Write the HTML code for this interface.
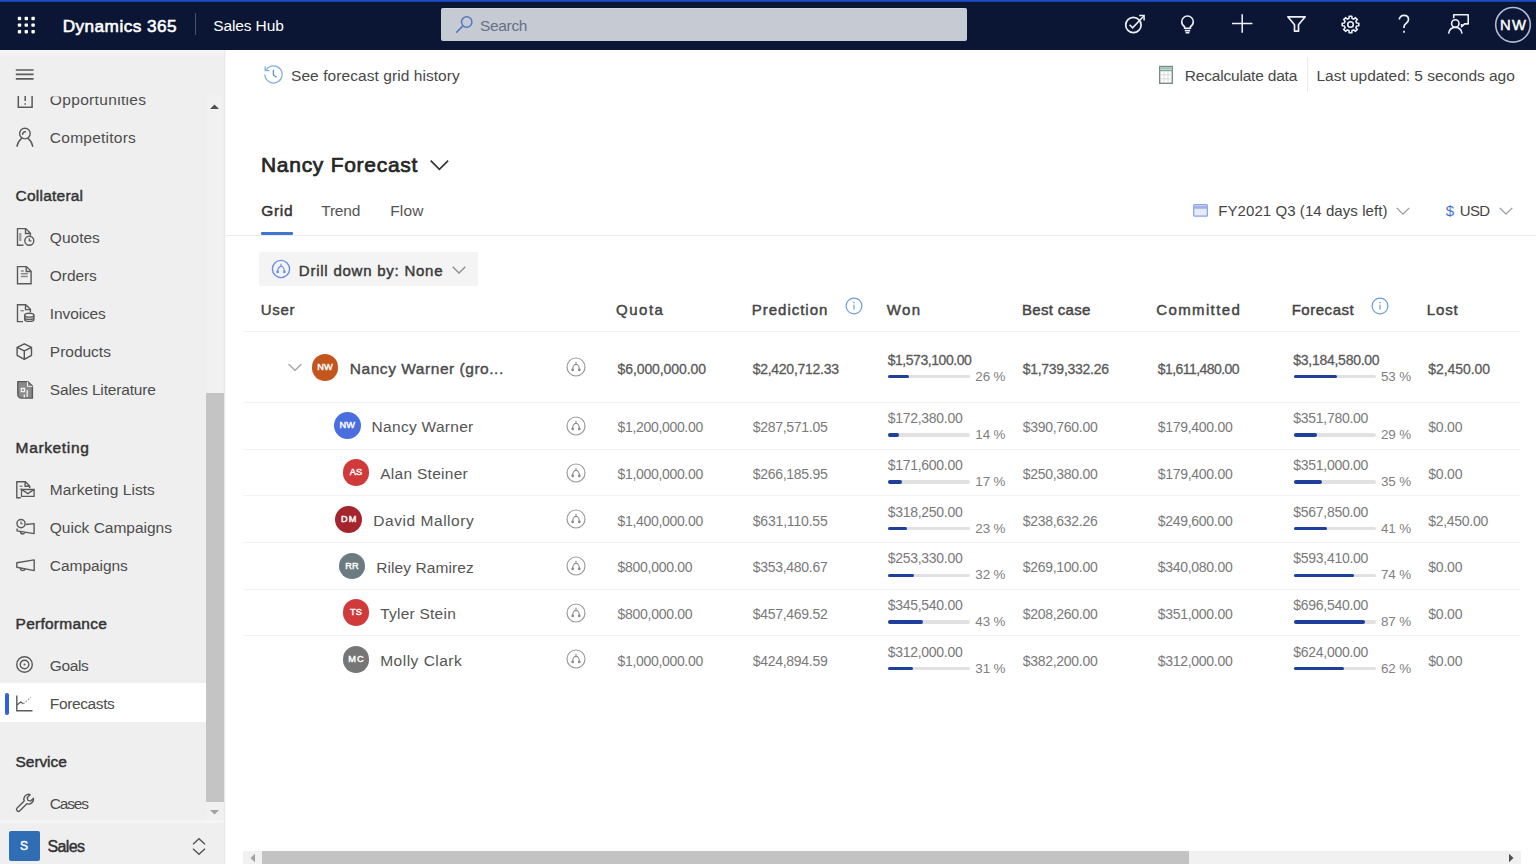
<!DOCTYPE html>
<html lang="en">
<head>
<meta charset="utf-8">
<title>Forecasts - Dynamics 365 Sales Hub</title>
<style>
html,body{margin:0;padding:0;}
body{width:1536px;height:864px;overflow:hidden;background:#fff;position:relative;font-family:"Liberation Sans",Arial,sans-serif;}
.abs{position:absolute;}
.t{position:absolute;white-space:pre;font-family:"Liberation Sans",Arial,sans-serif;}
#topline{left:0;top:0;width:1536px;height:2px;background:linear-gradient(180deg,#1d4cc8 0,#1d4cc8 55%,#15358f 100%);}
#header{left:0;top:2px;width:1536px;height:48px;background:#0a1634;}
#search{left:441.300px;top:8.200px;width:526px;height:33.300px;background:#c6cad3;border-radius:2px;border-top:1px solid #d2d5dc;box-sizing:border-box;}
#sidebar{left:0;top:50px;width:224px;height:814px;background:linear-gradient(180deg,#f6f6f6 0,#efefef 7px,#efefef 100%);border-right:1px solid #e9e9e9;box-sizing:content-box;}
#sbtrack{left:206px;top:95px;width:17px;height:728px;background:#f1f1f1;}
#sbthumb{left:206px;top:393.300px;width:17.600px;height:409px;background:#c4c4c4;}
#sbedge{left:225px;top:50px;width:2px;height:814px;background:linear-gradient(90deg,#f7f7f7,#fff);}
#active{left:0;top:683px;width:206px;height:39px;background:#fff;}
#activebar{left:5px;top:693px;width:4px;height:22px;background:#2f5fe0;border-radius:2px;}
#sbsep{left:0;top:820px;width:224px;height:3px;background:#f5f5f5;}
#sbadge{left:9px;top:831px;width:31px;height:30px;background:#2f6db5;border-radius:2px;}
.hl{position:absolute;height:1px;background:#f3f3f3;}
#tabline{left:226px;top:235px;width:1310px;background:#ebebeb;}
#tabul{left:261px;top:232px;width:31.5px;height:2.6px;background:#3f74d1;border-radius:1px;}
#drill{left:259px;top:252px;width:219px;height:34px;background:#f4f4f4;border-radius:2px;}
#tbdiv{left:1306.700px;top:57px;width:1px;height:35px;background:#e9e9e9;}
#hdiv{left:194.5px;top:13px;width:1px;height:22px;background:#4a536b;}
.av{position:absolute;width:27px;height:27px;border-radius:50%;}
.bar{position:absolute;height:3.6px;width:82px;background:#e1e1e1;border-radius:2px;}
.bar i{position:absolute;left:0;top:0;height:100%;background:#1f3f9c;border-radius:2px;display:block;}
#hsb{left:243px;top:851px;width:1278px;height:13px;background:#f1f1f1;}
#hsbthumb{left:262px;top:851px;width:927px;height:13px;background:#c3c3c3;}
svg{position:absolute;overflow:visible;}
</style>
</head>
<body>
<header>
<div class="abs" id="topline"></div>
<div class="abs" id="header"></div>
<div class="abs" id="hdiv"></div>
<div class="abs" id="search"></div>
<!-- ===== header icons ===== -->
<svg style="left:17px;top:15.5px" width="19" height="19" viewBox="0 0 19 19" fill="#fff">
<g><rect x="0.8" y="0.8" width="3.4" height="3.4" rx=".8"/><rect x="7.6" y="0.8" width="3.4" height="3.4" rx=".8"/><rect x="14.4" y="0.8" width="3.4" height="3.4" rx=".8"/>
<rect x="0.8" y="7.4" width="3.4" height="3.4" rx=".8"/><rect x="7.6" y="7.4" width="3.4" height="3.4" rx=".8"/><rect x="14.4" y="7.4" width="3.4" height="3.4" rx=".8"/>
<rect x="0.8" y="14" width="3.4" height="3.4" rx=".8"/><rect x="7.6" y="14" width="3.4" height="3.4" rx=".8"/><rect x="14.4" y="14" width="3.4" height="3.4" rx=".8"/></g></svg>
<!-- search magnifier -->
<svg style="left:455px;top:15px" width="19" height="19" viewBox="0 0 19 19" fill="none" stroke="#5577c2" stroke-width="1.5"><circle cx="11.7" cy="7" r="5.2"/><path d="M7.9 10.9L1.2 17.6"/></svg>
<!-- task -->
<svg style="left:1123px;top:13px" width="23" height="22" viewBox="0 0 23 22" fill="none" stroke="#eef0f6" stroke-width="1.7"><circle cx="10.4" cy="12" r="7.7"/><path d="M6.6 11.8l3 3L20.6 3.2" stroke-width="1.6"/><path d="M16.2 2.6h4.9v4.9" stroke-width="1.5"/></svg>
<!-- bulb -->
<svg style="left:1179px;top:13.5px" width="17" height="21" viewBox="0 0 17 21" fill="none" stroke="#eef0f6" stroke-width="1.6"><path d="M5.6 14.2v-1.5C3.7 11.6 2.7 9.8 2.7 7.8 2.7 4.6 5.3 2 8.5 2s5.8 2.6 5.8 5.8c0 2-1 3.8-2.9 4.9v1.500z"/><path d="M5.8 16.6h5.4M6.6 18.8h3.800"/></svg>
<!-- plus -->
<svg style="left:1231px;top:13px" width="22" height="22" viewBox="0 0 22 22" fill="none" stroke="#f2f4f9" stroke-width="1.5"><path d="M11.2 1.300v18.400M1 10.600h20.4"/></svg>
<!-- funnel -->
<svg style="left:1285.500px;top:15px" width="22" height="18" viewBox="0 0 22 18" fill="none" stroke="#eef0f6" stroke-width="1.7" stroke-linejoin="round"><path d="M1.800 1.800h17.400l-6.700 7.900v6.500h-4v-6.500z"/></svg>
<!-- gear -->
<svg style="left:1339.9px;top:13.9px" width="21" height="21" viewBox="-10.5 -10.5 21 21" fill="none" stroke="#eef0f6" stroke-width="1.6" stroke-linejoin="round">
<path d="M-1.52 -6.11 L-1.31 -8.30 L1.31 -8.30 L1.52 -6.11 L3.25 -5.40 L4.94 -6.80 L6.80 -4.94 L5.40 -3.25 L6.11 -1.52 L8.30 -1.31 L8.30 1.31 L6.11 1.52 L5.40 3.25 L6.80 4.94 L4.94 6.80 L3.25 5.40 L1.52 6.11 L1.31 8.30 L-1.31 8.30 L-1.52 6.11 L-3.25 5.40 L-4.94 6.80 L-6.80 4.94 L-5.40 3.25 L-6.11 1.52 L-8.30 1.31 L-8.30 -1.31 L-6.11 -1.52 L-5.40 -3.25 L-6.80 -4.94 L-4.94 -6.80 L-3.25 -5.40Z"/><circle cx="0" cy="0" r="2.8"/></svg>
<!-- help -->
<svg style="left:1396.2px;top:13.300px" width="16" height="22" viewBox="0 0 16 22" fill="none" stroke="#eef0f6" stroke-width="1.7"><path d="M3.300 6.600c0-2.600 2-4.200 4.600-4.200s4.600 1.600 4.600 4.100c0 2.200-1.400 3.100-2.700 4.200-1.100.9-1.800 1.700-1.800 3.300v1"/><path d="M8 17.800v2"/></svg>
<!-- person + chat -->
<svg style="left:1447px;top:13px" width="23" height="22" viewBox="0 0 23 22" fill="none" stroke="#eef0f6" stroke-width="1.6" stroke-linejoin="round"><circle cx="8.300" cy="10.500" r="3.700"/><path d="M1.600 20.600c.5-3.800 3.200-6.200 6.700-6.200s6.200 2.400 6.700 6.200"/><path d="M6.700 5.200V1.700h14.500v9.200h-3.600l-3 2.800v-2.800"/></svg>
<!-- avatar ring -->
<svg style="left:1494px;top:6px" width="38" height="38" viewBox="0 0 38 38" fill="none"><circle cx="19" cy="18.800" r="17.300" stroke="#b3bbd2" stroke-width="1.600"/></svg>


<span class="t" style="left:62.64px;top:17.64px;font-size:17.2px;line-height:17.2px;font-weight:400;color:#fff;letter-spacing:0.465px;-webkit-text-stroke:0.6px #fff;">Dynamics 365</span>
<span class="t" style="left:213.22px;top:18.48px;font-size:15.5px;line-height:15.5px;font-weight:400;color:#fff;letter-spacing:-0.121px;">Sales Hub</span>
<span class="t" style="left:480.03px;top:18.18px;font-size:15.5px;line-height:15.5px;font-weight:400;color:#667085;letter-spacing:-0.335px;">Search</span>
<span class="t" style="left:1500.06px;top:18.17px;font-size:14.8px;line-height:14.8px;font-weight:400;color:#fff;letter-spacing:1.224px;-webkit-text-stroke:0.45px #fff;">NW</span>
</header>
<nav>
<div class="abs" id="sidebar"></div>
<div class="abs" id="sbtrack"></div>
<div class="abs" id="sbthumb"></div>
<div class="abs" id="sbedge"></div>
<div class="abs" id="active"></div>
<div class="abs" id="activebar"></div>
<div class="abs" id="sbsep"></div>
<div class="abs" id="sbadge"></div>
<!-- ===== sidebar icons ===== -->
<svg style="left:15px;top:68px" width="20" height="13" viewBox="0 0 20 13" fill="none" stroke="#5c5c5c" stroke-width="1.700"><path d="M.8 2h17.800M.8 6.400h17.800M.8 10.800h17.800"/></svg>
<!-- opportunities (clipped) -->
<svg style="left:16px;top:96px" width="19" height="13" viewBox="0 0 19 13" fill="none" stroke="#5a5a5a" stroke-width="1.500"><path d="M2.300 0v11.200h13.800V0M9.200 0v5"/><path d="M9.200 7.300v1.500"/></svg>
<!-- competitors -->
<svg style="left:15px;top:126px" width="21" height="22" viewBox="0 0 21 22" fill="none" stroke="#5a5a5a" stroke-width="1.400" stroke-linecap="round"><circle cx="9.900" cy="7.600" r="5.300"/><path d="M2 20.300c.7-3.500 2.200-6 4.600-7.900M17.700 20.300c-.7-3.500-2.200-6-4.600-7.900"/><path d="M7.600 8.300c.200-1.700 1.300-2.700 2.900-2.600"/></svg>
<!-- scroll arrows -->
<svg style="left:209px;top:103px" width="11" height="7" viewBox="0 0 11 7"><path d="M1 6l4.500-4.600L10 6z" fill="#505050"/></svg>
<svg style="left:209px;top:809px" width="11" height="7" viewBox="0 0 11 7"><path d="M1 1l4.500 4.600L10 1z" fill="#a0a0a0"/></svg>
<!-- quotes -->
<svg style="left:16px;top:227px" width="20" height="21" viewBox="0 0 20 21" fill="none" stroke="#5a5a5a" stroke-width="1.400"><path d="M7.500 18.300H1.500V1.600h8.300l4.600 4.600v2.500M9.500 1.600v4.900h4.900"/><path d="M4.300 6v8" stroke="#9a9a9a" stroke-width="2.200"/><circle cx="13.300" cy="13.700" r="4.500"/><path d="M13.300 11.200v2.700h2.200" stroke-width="1.200"/></svg>
<!-- orders -->
<svg style="left:16px;top:265px" width="18" height="21" viewBox="0 0 18 21" fill="none" stroke="#5a5a5a" stroke-width="1.400"><path d="M1.500 1.600h9l4.600 4.600v12.500H1.500zM10.200 1.600v4.900h4.900"/><path d="M4.800 6h3M4.800 8.800h7M4.800 11.600h7" stroke="#8a8a8a" stroke-width="1.500"/></svg>
<!-- invoices -->
<svg style="left:16px;top:303px" width="20" height="21" viewBox="0 0 20 21" fill="none" stroke="#5a5a5a" stroke-width="1.400"><path d="M7 18.600H1.500V1.700h8.300l4.600 4.600v3M9.500 1.700v4.900h4.900"/><path d="M4.500 7.700h3.400" stroke="#8a8a8a"/><ellipse cx="13.300" cy="12.200" rx="4.600" ry="1.900"/><path d="M8.700 12.200v4.300c0 1.100 2.100 1.900 4.600 1.900s4.600-.8 4.600-1.900v-4.300M8.700 14.500c0 1.100 2.100 1.900 4.600 1.900s4.600-.8 4.600-1.900"/></svg>
<!-- products -->
<svg style="left:15px;top:342px" width="19" height="19" viewBox="0 0 19 19" fill="none" stroke="#555" stroke-width="1.400" stroke-linejoin="round"><path d="M9.300 1.800l7.200 3.500v8l-7.200 4-7.200-4v-8zM2.100 5.300l7.200 3.600 7.200-3.600M9.300 8.900v8.400"/></svg>
<!-- sales literature -->
<svg style="left:16px;top:380px" width="19" height="20" viewBox="0 0 19 20" fill="none" stroke="#5a5a5a" stroke-width="1.400"><path d="M1.800 1.600h10l4.600 4.500v12H5.400c-2 0-3.600-1.600-3.600-3.600z" fill="#8a8a8a"/><path d="M5.300 8.500h3.200v3.200H5.300zM11.200 10v7M8.300 14.600v3" stroke="#efefef" stroke-width="1.300"/><path d="M11.500 1.600v4.800h4.900" stroke="#efefef" stroke-width="1"/></svg>
<!-- marketing lists -->
<svg style="left:15px;top:480px" width="21" height="20" viewBox="0 0 21 20" fill="none" stroke="#5a5a5a" stroke-width="1.400"><path d="M5.800 17.800H1.800V1.700h8.600l4.300 4.300v2.300M10.100 1.700v4.600h4.600"/><path d="M4.600 6.300h3M4.600 9.100h2" stroke="#8a8a8a"/><path d="M6.500 9.500h12.600v6.800H6.500zM6.500 9.500l6.300 4.100 6.300-4.100" stroke-width="1.300"/></svg>
<!-- quick campaigns -->
<svg style="left:15px;top:518px" width="21" height="19" viewBox="0 0 21 19" fill="none" stroke="#5a5a5a" stroke-width="1.400" stroke-linejoin="round"><circle cx="6" cy="5.600" r="4.100"/><path d="M6 3.600v2.200h1.700" stroke-width="1.100"/><path d="M10.600 6.500l8.500-.9v10l-17-2.700v-2.400"/><path d="M5.400 13.700c.2 1.500 1.100 2.300 2.200 2.300s2-.6 2.300-1.600"/></svg>
<!-- campaigns -->
<svg style="left:15px;top:558px" width="21" height="15" viewBox="0 0 21 15" fill="none" stroke="#5a5a5a" stroke-width="1.400" stroke-linejoin="round"><path d="M1.800 4.800L19.200 1.900v10.700L1.800 9.200z"/><path d="M5.300 10c.2 1.700 1.200 2.600 2.400 2.600s2.200-.7 2.500-1.800"/></svg>
<!-- goals -->
<svg style="left:15px;top:655px" width="19" height="19" viewBox="0 0 19 19" fill="none" stroke="#5a5a5a" stroke-width="1.400"><circle cx="9.500" cy="9.500" r="7.800"/><circle cx="9.500" cy="9.500" r="4.300"/><circle cx="9.500" cy="9.500" r="1" fill="#5a5a5a" stroke="none"/></svg>
<!-- forecasts -->
<svg style="left:15px;top:694px" width="19" height="19" viewBox="0 0 19 19" fill="none" stroke="#5a5a5a" stroke-width="1.400"><path d="M1.800 1.500v15.300h15.700"/><path d="M2 11l3.600-3 2.700 1.800" stroke-width="1.300"/><path d="M8.300 9.800L16 3.300" stroke="#9a9a9a" stroke-width="1.300" stroke-dasharray="1.600 1.500"/></svg>
<!-- cases (wrench) -->
<svg style="left:14px;top:792px" width="22" height="22" viewBox="0 0 22 22" fill="none" stroke="#5a5a5a" stroke-width="1.400" stroke-linejoin="round" stroke-linecap="round"><path d="M14.700 2.300a4.900 4.900 0 0 0-4.500 6.700l-7.100 7.100a1.900 1.900 0 0 0 2.700 2.700l7.100-7.100a4.900 4.900 0 0 0 6.600-5.500l-2.900 2.900-2.700-.7-.7-2.700 2.900-2.900a4.900 4.900 0 0 0-1.400-.5z"/></svg>
<!-- S area up/down chevron -->
<svg style="left:191px;top:837px" width="16" height="19" viewBox="0 0 16 19" fill="none" stroke="#555" stroke-width="1.400"><path d="M2 7.300l6-5.600 6 5.600M2 11.700l6 5.600 6-5.600"/></svg>


<span class="t" style="left:49.83px;top:92.48px;font-size:15.5px;line-height:15.5px;font-weight:400;color:#4d4d4d;letter-spacing:0.337px;clip-path:inset(4.1px 0 0 0);">Opportunities</span>
<span class="t" style="left:49.83px;top:130.48px;font-size:15.5px;line-height:15.5px;font-weight:400;color:#4d4d4d;letter-spacing:0.249px;">Competitors</span>
<span class="t" style="left:15.62px;top:188.18px;font-size:15.5px;line-height:15.5px;font-weight:400;color:#333;letter-spacing:0.218px;-webkit-text-stroke:0.45px #333;">Collateral</span>
<span class="t" style="left:49.83px;top:230.48px;font-size:15.5px;line-height:15.5px;font-weight:400;color:#4d4d4d;letter-spacing:0.013px;">Quotes</span>
<span class="t" style="left:49.83px;top:268.48px;font-size:15.5px;line-height:15.5px;font-weight:400;color:#4d4d4d;letter-spacing:-0.065px;">Orders</span>
<span class="t" style="left:49.83px;top:306.48px;font-size:15.5px;line-height:15.5px;font-weight:400;color:#4d4d4d;letter-spacing:-0.118px;">Invoices</span>
<span class="t" style="left:49.83px;top:344.48px;font-size:15.5px;line-height:15.5px;font-weight:400;color:#4d4d4d;letter-spacing:-0.017px;">Products</span>
<span class="t" style="left:49.83px;top:382.48px;font-size:15.5px;line-height:15.5px;font-weight:400;color:#4d4d4d;letter-spacing:-0.168px;">Sales Literature</span>
<span class="t" style="left:15.62px;top:440.18px;font-size:15.5px;line-height:15.5px;font-weight:400;color:#333;letter-spacing:0.636px;-webkit-text-stroke:0.45px #333;">Marketing</span>
<span class="t" style="left:49.83px;top:482.48px;font-size:15.5px;line-height:15.5px;font-weight:400;color:#4d4d4d;letter-spacing:0.058px;">Marketing Lists</span>
<span class="t" style="left:49.83px;top:520.48px;font-size:15.5px;line-height:15.5px;font-weight:400;color:#4d4d4d;letter-spacing:-0.020px;">Quick Campaigns</span>
<span class="t" style="left:49.83px;top:558.48px;font-size:15.5px;line-height:15.5px;font-weight:400;color:#4d4d4d;letter-spacing:-0.045px;">Campaigns</span>
<span class="t" style="left:15.62px;top:616.18px;font-size:15.5px;line-height:15.5px;font-weight:400;color:#333;letter-spacing:0.242px;-webkit-text-stroke:0.45px #333;">Performance</span>
<span class="t" style="left:49.83px;top:658.48px;font-size:15.5px;line-height:15.5px;font-weight:400;color:#4d4d4d;letter-spacing:-0.363px;">Goals</span>
<span class="t" style="left:49.83px;top:696.48px;font-size:15.5px;line-height:15.5px;font-weight:400;color:#4d4d4d;letter-spacing:-0.377px;">Forecasts</span>
<span class="t" style="left:15.62px;top:754.18px;font-size:15.5px;line-height:15.5px;font-weight:400;color:#333;letter-spacing:-0.090px;-webkit-text-stroke:0.45px #333;">Service</span>
<span class="t" style="left:49.83px;top:796.48px;font-size:15.5px;line-height:15.5px;font-weight:400;color:#4d4d4d;letter-spacing:-1.200px;">Cases</span>
<span class="t" style="left:19.90px;top:839.84px;font-size:12px;line-height:12px;font-weight:400;color:#fff;letter-spacing:0.000px;-webkit-text-stroke:0.45px #fff;">S</span>
<span class="t" style="left:47.50px;top:838.96px;font-size:16px;line-height:16px;font-weight:400;color:#333;letter-spacing:-0.633px;-webkit-text-stroke:0.45px #333;">Sales</span>
</nav>
<main>
<div class="hl" id="tabline"></div>
<div class="abs" id="tabul"></div>
<div class="abs" id="drill"></div>
<div class="abs" id="tbdiv"></div>
<div class="abs" id="hsb"></div>
<div class="abs" id="hsbthumb"></div>
<div class="hl" style="left:243px;top:330.5px;width:1277px;"></div>
<div class="hl" style="left:243px;top:401.8px;width:1277px;"></div>
<div class="hl" style="left:243px;top:448.6px;width:1277px;"></div>
<div class="hl" style="left:243px;top:495.3px;width:1277px;"></div>
<div class="hl" style="left:243px;top:542.0px;width:1277px;"></div>
<div class="hl" style="left:243px;top:588.7px;width:1277px;"></div>
<div class="hl" style="left:243px;top:635.4px;width:1277px;"></div>
<div class="av" style="left:311.6px;top:353.9px;width:26.8px;height:26.8px;background:#c4551d;"></div>
<div class="av" style="left:333.8px;top:412.4px;width:26.8px;height:26.8px;background:#4a6ee0;"></div>
<div class="av" style="left:342.6px;top:459.1px;width:26.8px;height:26.8px;background:#d13a3a;"></div>
<div class="av" style="left:335.3px;top:505.8px;width:26.8px;height:26.8px;background:#a4262c;"></div>
<div class="av" style="left:338.6px;top:552.5px;width:26.8px;height:26.8px;background:#6b7b80;"></div>
<div class="av" style="left:342.6px;top:599.2px;width:26.8px;height:26.8px;background:#d13a3a;"></div>
<div class="av" style="left:342.6px;top:645.9px;width:26.8px;height:26.8px;background:#767676;"></div>
<svg style="left:565.2px;top:355.9px;" width="22" height="22" viewBox="-11 -11 22 22" fill="none"><circle cx="0" cy="0" r="9" stroke="#9c9c9c" stroke-width="1.2"/><path d="M0 -5.2v2.600M-3.3 2.300C-3.300 -1 -1.400 -2.600 0 -2.600C1.400 -2.600 3.300 -1 3.300 2.300" stroke="#8a8a8a" stroke-width="1.100"/><circle cx="-3.3" cy="2.9" r="1.35" fill="#8a8a8a"/><circle cx="3.3" cy="2.9" r="1.35" fill="#8a8a8a"/></svg>
<svg style="left:565.2px;top:414.8px;" width="22" height="22" viewBox="-11 -11 22 22" fill="none"><circle cx="0" cy="0" r="9" stroke="#9c9c9c" stroke-width="1.2"/><path d="M0 -5.2v2.600M-3.3 2.300C-3.300 -1 -1.400 -2.600 0 -2.600C1.400 -2.600 3.300 -1 3.300 2.300" stroke="#8a8a8a" stroke-width="1.100"/><circle cx="-3.3" cy="2.9" r="1.35" fill="#8a8a8a"/><circle cx="3.3" cy="2.9" r="1.35" fill="#8a8a8a"/></svg>
<svg style="left:565.2px;top:461.5px;" width="22" height="22" viewBox="-11 -11 22 22" fill="none"><circle cx="0" cy="0" r="9" stroke="#9c9c9c" stroke-width="1.2"/><path d="M0 -5.2v2.600M-3.3 2.300C-3.300 -1 -1.400 -2.600 0 -2.600C1.400 -2.600 3.300 -1 3.300 2.300" stroke="#8a8a8a" stroke-width="1.100"/><circle cx="-3.3" cy="2.9" r="1.35" fill="#8a8a8a"/><circle cx="3.3" cy="2.9" r="1.35" fill="#8a8a8a"/></svg>
<svg style="left:565.2px;top:508.2px;" width="22" height="22" viewBox="-11 -11 22 22" fill="none"><circle cx="0" cy="0" r="9" stroke="#9c9c9c" stroke-width="1.2"/><path d="M0 -5.2v2.600M-3.3 2.300C-3.300 -1 -1.400 -2.600 0 -2.600C1.400 -2.600 3.300 -1 3.300 2.300" stroke="#8a8a8a" stroke-width="1.100"/><circle cx="-3.3" cy="2.9" r="1.35" fill="#8a8a8a"/><circle cx="3.3" cy="2.9" r="1.35" fill="#8a8a8a"/></svg>
<svg style="left:565.2px;top:554.9px;" width="22" height="22" viewBox="-11 -11 22 22" fill="none"><circle cx="0" cy="0" r="9" stroke="#9c9c9c" stroke-width="1.2"/><path d="M0 -5.2v2.600M-3.3 2.300C-3.300 -1 -1.400 -2.600 0 -2.600C1.400 -2.600 3.300 -1 3.300 2.300" stroke="#8a8a8a" stroke-width="1.100"/><circle cx="-3.3" cy="2.9" r="1.35" fill="#8a8a8a"/><circle cx="3.3" cy="2.9" r="1.35" fill="#8a8a8a"/></svg>
<svg style="left:565.2px;top:601.6px;" width="22" height="22" viewBox="-11 -11 22 22" fill="none"><circle cx="0" cy="0" r="9" stroke="#9c9c9c" stroke-width="1.2"/><path d="M0 -5.2v2.600M-3.3 2.300C-3.300 -1 -1.400 -2.600 0 -2.600C1.400 -2.600 3.300 -1 3.300 2.300" stroke="#8a8a8a" stroke-width="1.100"/><circle cx="-3.3" cy="2.9" r="1.35" fill="#8a8a8a"/><circle cx="3.3" cy="2.9" r="1.35" fill="#8a8a8a"/></svg>
<svg style="left:565.2px;top:648.3px;" width="22" height="22" viewBox="-11 -11 22 22" fill="none"><circle cx="0" cy="0" r="9" stroke="#9c9c9c" stroke-width="1.2"/><path d="M0 -5.2v2.600M-3.3 2.300C-3.300 -1 -1.400 -2.600 0 -2.600C1.400 -2.600 3.300 -1 3.300 2.300" stroke="#8a8a8a" stroke-width="1.100"/><circle cx="-3.3" cy="2.9" r="1.35" fill="#8a8a8a"/><circle cx="3.3" cy="2.9" r="1.35" fill="#8a8a8a"/></svg>
<div class="bar" style="left:888px;top:374.9px;"><i style="width:26%"></i></div>
<div class="bar" style="left:1293.6px;top:374.9px;"><i style="width:53%"></i></div>
<div class="bar" style="left:888px;top:433.4px;"><i style="width:14%"></i></div>
<div class="bar" style="left:1293.6px;top:433.4px;"><i style="width:29%"></i></div>
<div class="bar" style="left:888px;top:480.1px;"><i style="width:17%"></i></div>
<div class="bar" style="left:1293.6px;top:480.1px;"><i style="width:35%"></i></div>
<div class="bar" style="left:888px;top:526.8px;"><i style="width:23%"></i></div>
<div class="bar" style="left:1293.6px;top:526.8px;"><i style="width:41%"></i></div>
<div class="bar" style="left:888px;top:573.5px;"><i style="width:32%"></i></div>
<div class="bar" style="left:1293.6px;top:573.5px;"><i style="width:74%"></i></div>
<div class="bar" style="left:888px;top:620.2px;"><i style="width:43%"></i></div>
<div class="bar" style="left:1293.6px;top:620.2px;"><i style="width:87%"></i></div>
<div class="bar" style="left:888px;top:666.9px;"><i style="width:31%"></i></div>
<div class="bar" style="left:1293.6px;top:666.9px;"><i style="width:62%"></i></div>
<svg style="left:287px;top:362.3px;" width="16" height="10" viewBox="0 0 16 10" fill="none"><path d="M1.5 2.2L8 8.2L14.5 2.2" stroke="#a6a6a6" stroke-width="1.4"/></svg>
<!-- ===== toolbar icons ===== -->
<!-- history -->
<svg style="left:263px;top:64px" width="21" height="21" viewBox="0 0 21 21" fill="none" stroke="#86aee0" stroke-width="1.300"><path d="M3 6.200A8.600 8.600 0 1 1 1.900 10.600"/><path d="M2.200 2.300v4.300h4.300"/><path d="M10.400 5.800v5.200l3.300 2.200" stroke="#5d8ed0"/></svg>
<!-- recalculate (calculator) -->
<svg style="left:1158px;top:65px" width="16" height="20" viewBox="0 0 16 20" fill="none" stroke="#7d8985" stroke-width="1.400"><rect x="1.700" y="1.500" width="12.600" height="16.800"/><path d="M2.400 3.400h11.200" stroke="#9cc3b7" stroke-width="2.400"/><path d="M1.700 5.600h12.600" stroke="#7fa99c" stroke-width="1.300"/><path d="M2.400 9.800h11.200M2.400 13.800h11.200M6 6.200v11.600M10 6.200v11.600" stroke="#d4dbd8" stroke-width="1"/></svg>
<!-- title chevron -->
<svg style="left:429px;top:158px" width="21" height="14" viewBox="0 0 21 14" fill="none" stroke="#333" stroke-width="1.700"><path d="M1.700 2.700l8.700 8.700 8.700-8.700"/></svg>
<!-- calendar -->
<svg style="left:1192px;top:203px" width="17" height="15" viewBox="0 0 17 15" fill="none" stroke="#8ba4e3" stroke-width="1.300"><rect x="1.700" y="1.700" width="13.700" height="11.500" rx="1" fill="#e6ebfa"/><path d="M1.700 4.300h13.700" stroke-width="3" stroke="#9db3ea"/></svg>
<!-- period chevron / currency chevron -->
<svg style="left:1395px;top:206px" width="16" height="10" viewBox="0 0 16 10" fill="none" stroke="#9c9c9c" stroke-width="1.300"><path d="M1.700 1.900l6.300 6.300 6.300-6.300"/></svg>
<svg style="left:1498px;top:206px" width="16" height="10" viewBox="0 0 16 10" fill="none" stroke="#9c9c9c" stroke-width="1.300"><path d="M1.700 1.900l6.300 6.300 6.300-6.300"/></svg>
<!-- drill icon -->
<svg style="left:270.300px;top:258.300px" width="22" height="22" viewBox="-11 -11 22 22" fill="none"><circle cx="0" cy="0" r="8.600" stroke="#6f8fe6" stroke-width="1.400"/><path d="M0 -5.200v2.600M-3.300 2.300C-3.300 -1 -1.400 -2.600 0 -2.600C1.400 -2.600 3.300 -1 3.300 2.300" stroke="#6f8fe6" stroke-width="1.200"/><circle cx="-3.300" cy="2.900" r="1.400" fill="#6f8fe6"/><circle cx="3.300" cy="2.900" r="1.400" fill="#6f8fe6"/></svg>
<svg style="left:450.500px;top:264.500px" width="16" height="10" viewBox="0 0 16 10" fill="none" stroke="#8c8c8c" stroke-width="1.300"><path d="M1.700 1.700l6.300 6.300 6.300-6.300"/></svg>
<!-- info icons -->
<svg style="left:844px;top:296px" width="20" height="20" viewBox="-10 -10 20 20" fill="none"><circle cx="0" cy="0" r="7.900" stroke="#6c9ae0" stroke-width="1.200"/><path d="M0 -1.300v4.800" stroke="#6c9ae0" stroke-width="1.200"/><circle cx="0" cy="-3.500" r=".8" fill="#6c9ae0"/></svg>
<svg style="left:1370px;top:296px" width="20" height="20" viewBox="-10 -10 20 20" fill="none"><circle cx="0" cy="0" r="7.900" stroke="#6c9ae0" stroke-width="1.200"/><path d="M0 -1.300v4.800" stroke="#6c9ae0" stroke-width="1.200"/><circle cx="0" cy="-3.500" r=".8" fill="#6c9ae0"/></svg>
<!-- horizontal scrollbar arrows -->
<svg style="left:249px;top:853px" width="7" height="10" viewBox="0 0 7 10"><path d="M6 .8L1.500 5 6 9.200z" fill="#a0a0a0"/></svg>
<svg style="left:1508px;top:853px" width="7" height="10" viewBox="0 0 7 10"><path d="M1 .8L5.500 5 1 9.200z" fill="#505050"/></svg>

<span class="t" style="left:291.03px;top:67.78px;font-size:15.5px;line-height:15.5px;font-weight:400;color:#484848;letter-spacing:0.067px;">See forecast grid history</span>
<span class="t" style="left:1184.82px;top:67.78px;font-size:15.5px;line-height:15.5px;font-weight:400;color:#484848;letter-spacing:-0.195px;">Recalculate data</span>
<span class="t" style="left:1316.52px;top:67.78px;font-size:15.5px;line-height:15.5px;font-weight:400;color:#484848;letter-spacing:-0.032px;">Last updated: 5 seconds ago</span>
<span class="t" style="left:260.95px;top:154.42px;font-size:21px;line-height:21px;font-weight:400;color:#252525;letter-spacing:0.726px;-webkit-text-stroke:0.7px #252525;">Nancy Forecast</span>
<span class="t" style="left:261.23px;top:203.48px;font-size:15.5px;line-height:15.5px;font-weight:400;color:#333;letter-spacing:0.684px;-webkit-text-stroke:0.45px #333;">Grid</span>
<span class="t" style="left:321.23px;top:203.48px;font-size:15.5px;line-height:15.5px;font-weight:400;color:#555;letter-spacing:-0.218px;">Trend</span>
<span class="t" style="left:390.23px;top:203.48px;font-size:15.5px;line-height:15.5px;font-weight:400;color:#555;letter-spacing:0.139px;">Flow</span>
<span class="t" style="left:1218.25px;top:202.80px;font-size:15px;line-height:15px;font-weight:400;color:#444;letter-spacing:0.070px;">FY2021 Q3 (14 days left)</span>
<span class="t" style="left:1445.75px;top:202.80px;font-size:15px;line-height:15px;font-weight:400;color:#4a6fd0;letter-spacing:0.000px;">$</span>
<span class="t" style="left:1459.65px;top:202.80px;font-size:15px;line-height:15px;font-weight:400;color:#444;letter-spacing:-0.586px;">USD</span>
<span class="t" style="left:298.85px;top:262.70px;font-size:15px;line-height:15px;font-weight:400;color:#3a3a3a;letter-spacing:0.758px;-webkit-text-stroke:0.45px #3a3a3a;">Drill down by: None</span>
<span class="t" style="left:260.75px;top:302.00px;font-size:15px;line-height:15px;font-weight:400;color:#444;letter-spacing:0.676px;-webkit-text-stroke:0.45px #444;">User</span>
<span class="t" style="left:616.05px;top:302.00px;font-size:15px;line-height:15px;font-weight:400;color:#444;letter-spacing:1.500px;-webkit-text-stroke:0.45px #444;">Quota</span>
<span class="t" style="left:751.75px;top:302.00px;font-size:15px;line-height:15px;font-weight:400;color:#444;letter-spacing:0.989px;-webkit-text-stroke:0.45px #444;">Prediction</span>
<span class="t" style="left:886.65px;top:302.00px;font-size:15px;line-height:15px;font-weight:400;color:#444;letter-spacing:1.500px;-webkit-text-stroke:0.45px #444;">Won</span>
<span class="t" style="left:1021.95px;top:302.00px;font-size:15px;line-height:15px;font-weight:400;color:#444;letter-spacing:0.328px;-webkit-text-stroke:0.45px #444;">Best case</span>
<span class="t" style="left:1156.25px;top:302.00px;font-size:15px;line-height:15px;font-weight:400;color:#444;letter-spacing:1.371px;-webkit-text-stroke:0.45px #444;">Committed</span>
<span class="t" style="left:1291.65px;top:302.00px;font-size:15px;line-height:15px;font-weight:400;color:#444;letter-spacing:0.534px;-webkit-text-stroke:0.45px #444;">Forecast</span>
<span class="t" style="left:1426.65px;top:302.00px;font-size:15px;line-height:15px;font-weight:400;color:#444;letter-spacing:0.914px;-webkit-text-stroke:0.45px #444;">Lost</span>
<span class="t" style="left:349.83px;top:361.28px;font-size:15.5px;line-height:15.5px;font-weight:400;color:#4a4a4a;letter-spacing:0.535px;-webkit-text-stroke:0.38px #4a4a4a;">Nancy Warner (gro...</span>
<span class="t" style="left:617.50px;top:361.65px;font-size:14.0px;line-height:14.0px;font-weight:400;color:#5a5a5a;letter-spacing:-0.089px;-webkit-text-stroke:0.28px #5a5a5a;">$6,000,000.00</span>
<span class="t" style="left:752.70px;top:361.65px;font-size:14.0px;line-height:14.0px;font-weight:400;color:#5a5a5a;letter-spacing:-0.271px;-webkit-text-stroke:0.28px #5a5a5a;">$2,420,712.33</span>
<span class="t" style="left:1022.70px;top:361.65px;font-size:14.0px;line-height:14.0px;font-weight:400;color:#5a5a5a;letter-spacing:-0.271px;-webkit-text-stroke:0.28px #5a5a5a;">$1,739,332.26</span>
<span class="t" style="left:1157.70px;top:361.65px;font-size:14.0px;line-height:14.0px;font-weight:400;color:#5a5a5a;letter-spacing:-0.548px;-webkit-text-stroke:0.28px #5a5a5a;">$1,611,480.00</span>
<span class="t" style="left:1428.20px;top:361.65px;font-size:14.0px;line-height:14.0px;font-weight:400;color:#5a5a5a;letter-spacing:-0.050px;-webkit-text-stroke:0.28px #5a5a5a;">$2,450.00</span>
<span class="t" style="left:887.70px;top:352.85px;font-size:14.0px;line-height:14.0px;font-weight:400;color:#5a5a5a;letter-spacing:-0.453px;-webkit-text-stroke:0.28px #5a5a5a;">$1,573,100.00</span>
<span class="t" style="left:975.33px;top:369.76px;font-size:13.4px;line-height:13.4px;font-weight:400;color:#808080;letter-spacing:-0.130px;">26 %</span>
<span class="t" style="left:1293.30px;top:352.85px;font-size:14.0px;line-height:14.0px;font-weight:400;color:#5a5a5a;letter-spacing:-0.271px;-webkit-text-stroke:0.28px #5a5a5a;">$3,184,580.00</span>
<span class="t" style="left:1380.93px;top:369.76px;font-size:13.4px;line-height:13.4px;font-weight:400;color:#808080;letter-spacing:-0.130px;">53 %</span>
<span class="t" style="left:371.62px;top:419.48px;font-size:15.5px;line-height:15.5px;font-weight:400;color:#555;letter-spacing:0.288px;">Nancy Warner</span>
<span class="t" style="left:617.50px;top:420.15px;font-size:14.0px;line-height:14.0px;font-weight:400;color:#797979;letter-spacing:-0.321px;">$1,200,000.00</span>
<span class="t" style="left:752.70px;top:420.15px;font-size:14.0px;line-height:14.0px;font-weight:400;color:#797979;letter-spacing:-0.277px;">$287,571.05</span>
<span class="t" style="left:1022.70px;top:420.15px;font-size:14.0px;line-height:14.0px;font-weight:400;color:#797979;letter-spacing:-0.277px;">$390,760.00</span>
<span class="t" style="left:1157.70px;top:420.15px;font-size:14.0px;line-height:14.0px;font-weight:400;color:#797979;letter-spacing:-0.277px;">$179,400.00</span>
<span class="t" style="left:1428.20px;top:420.15px;font-size:14.0px;line-height:14.0px;font-weight:400;color:#797979;letter-spacing:-0.181px;">$0.00</span>
<span class="t" style="left:887.70px;top:411.35px;font-size:14.0px;line-height:14.0px;font-weight:400;color:#797979;letter-spacing:-0.277px;">$172,380.00</span>
<span class="t" style="left:975.33px;top:428.26px;font-size:13.4px;line-height:13.4px;font-weight:400;color:#808080;letter-spacing:-0.130px;">14 %</span>
<span class="t" style="left:1293.30px;top:411.35px;font-size:14.0px;line-height:14.0px;font-weight:400;color:#797979;letter-spacing:-0.277px;">$351,780.00</span>
<span class="t" style="left:1380.93px;top:428.26px;font-size:13.4px;line-height:13.4px;font-weight:400;color:#808080;letter-spacing:-0.130px;">29 %</span>
<span class="t" style="left:380.23px;top:466.18px;font-size:15.5px;line-height:15.5px;font-weight:400;color:#555;letter-spacing:0.282px;">Alan Steiner</span>
<span class="t" style="left:617.50px;top:466.85px;font-size:14.0px;line-height:14.0px;font-weight:400;color:#797979;letter-spacing:-0.321px;">$1,000,000.00</span>
<span class="t" style="left:752.70px;top:466.85px;font-size:14.0px;line-height:14.0px;font-weight:400;color:#797979;letter-spacing:-0.277px;">$266,185.95</span>
<span class="t" style="left:1022.70px;top:466.85px;font-size:14.0px;line-height:14.0px;font-weight:400;color:#797979;letter-spacing:-0.277px;">$250,380.00</span>
<span class="t" style="left:1157.70px;top:466.85px;font-size:14.0px;line-height:14.0px;font-weight:400;color:#797979;letter-spacing:-0.277px;">$179,400.00</span>
<span class="t" style="left:1428.20px;top:466.85px;font-size:14.0px;line-height:14.0px;font-weight:400;color:#797979;letter-spacing:-0.181px;">$0.00</span>
<span class="t" style="left:887.70px;top:458.05px;font-size:14.0px;line-height:14.0px;font-weight:400;color:#797979;letter-spacing:-0.277px;">$171,600.00</span>
<span class="t" style="left:975.33px;top:474.96px;font-size:13.4px;line-height:13.4px;font-weight:400;color:#808080;letter-spacing:-0.130px;">17 %</span>
<span class="t" style="left:1293.30px;top:458.05px;font-size:14.0px;line-height:14.0px;font-weight:400;color:#797979;letter-spacing:-0.277px;">$351,000.00</span>
<span class="t" style="left:1380.93px;top:474.96px;font-size:13.4px;line-height:13.4px;font-weight:400;color:#808080;letter-spacing:-0.130px;">35 %</span>
<span class="t" style="left:373.23px;top:512.88px;font-size:15.5px;line-height:15.5px;font-weight:400;color:#555;letter-spacing:0.555px;">David Mallory</span>
<span class="t" style="left:617.50px;top:513.55px;font-size:14.0px;line-height:14.0px;font-weight:400;color:#797979;letter-spacing:-0.321px;">$1,400,000.00</span>
<span class="t" style="left:752.70px;top:513.55px;font-size:14.0px;line-height:14.0px;font-weight:400;color:#797979;letter-spacing:-0.174px;">$631,110.55</span>
<span class="t" style="left:1022.70px;top:513.55px;font-size:14.0px;line-height:14.0px;font-weight:400;color:#797979;letter-spacing:-0.277px;">$238,632.26</span>
<span class="t" style="left:1157.70px;top:513.55px;font-size:14.0px;line-height:14.0px;font-weight:400;color:#797979;letter-spacing:-0.277px;">$249,600.00</span>
<span class="t" style="left:1428.20px;top:513.55px;font-size:14.0px;line-height:14.0px;font-weight:400;color:#797979;letter-spacing:-0.287px;">$2,450.00</span>
<span class="t" style="left:887.70px;top:504.75px;font-size:14.0px;line-height:14.0px;font-weight:400;color:#797979;letter-spacing:-0.277px;">$318,250.00</span>
<span class="t" style="left:975.33px;top:521.66px;font-size:13.4px;line-height:13.4px;font-weight:400;color:#808080;letter-spacing:-0.130px;">23 %</span>
<span class="t" style="left:1293.30px;top:504.75px;font-size:14.0px;line-height:14.0px;font-weight:400;color:#797979;letter-spacing:-0.277px;">$567,850.00</span>
<span class="t" style="left:1380.93px;top:521.66px;font-size:13.4px;line-height:13.4px;font-weight:400;color:#808080;letter-spacing:-0.130px;">41 %</span>
<span class="t" style="left:376.23px;top:559.58px;font-size:15.5px;line-height:15.5px;font-weight:400;color:#555;letter-spacing:0.090px;">Riley Ramirez</span>
<span class="t" style="left:617.50px;top:560.25px;font-size:14.0px;line-height:14.0px;font-weight:400;color:#797979;letter-spacing:-0.277px;">$800,000.00</span>
<span class="t" style="left:752.70px;top:560.25px;font-size:14.0px;line-height:14.0px;font-weight:400;color:#797979;letter-spacing:-0.277px;">$353,480.67</span>
<span class="t" style="left:1022.70px;top:560.25px;font-size:14.0px;line-height:14.0px;font-weight:400;color:#797979;letter-spacing:-0.277px;">$269,100.00</span>
<span class="t" style="left:1157.70px;top:560.25px;font-size:14.0px;line-height:14.0px;font-weight:400;color:#797979;letter-spacing:-0.277px;">$340,080.00</span>
<span class="t" style="left:1428.20px;top:560.25px;font-size:14.0px;line-height:14.0px;font-weight:400;color:#797979;letter-spacing:-0.181px;">$0.00</span>
<span class="t" style="left:887.70px;top:551.45px;font-size:14.0px;line-height:14.0px;font-weight:400;color:#797979;letter-spacing:-0.277px;">$253,330.00</span>
<span class="t" style="left:975.33px;top:568.36px;font-size:13.4px;line-height:13.4px;font-weight:400;color:#808080;letter-spacing:-0.130px;">32 %</span>
<span class="t" style="left:1293.30px;top:551.45px;font-size:14.0px;line-height:14.0px;font-weight:400;color:#797979;letter-spacing:-0.277px;">$593,410.00</span>
<span class="t" style="left:1380.93px;top:568.36px;font-size:13.4px;line-height:13.4px;font-weight:400;color:#808080;letter-spacing:-0.130px;">74 %</span>
<span class="t" style="left:380.23px;top:606.28px;font-size:15.5px;line-height:15.5px;font-weight:400;color:#555;letter-spacing:0.232px;">Tyler Stein</span>
<span class="t" style="left:617.50px;top:606.95px;font-size:14.0px;line-height:14.0px;font-weight:400;color:#797979;letter-spacing:-0.277px;">$800,000.00</span>
<span class="t" style="left:752.70px;top:606.95px;font-size:14.0px;line-height:14.0px;font-weight:400;color:#797979;letter-spacing:-0.277px;">$457,469.52</span>
<span class="t" style="left:1022.70px;top:606.95px;font-size:14.0px;line-height:14.0px;font-weight:400;color:#797979;letter-spacing:-0.277px;">$208,260.00</span>
<span class="t" style="left:1157.70px;top:606.95px;font-size:14.0px;line-height:14.0px;font-weight:400;color:#797979;letter-spacing:-0.277px;">$351,000.00</span>
<span class="t" style="left:1428.20px;top:606.95px;font-size:14.0px;line-height:14.0px;font-weight:400;color:#797979;letter-spacing:-0.181px;">$0.00</span>
<span class="t" style="left:887.70px;top:598.15px;font-size:14.0px;line-height:14.0px;font-weight:400;color:#797979;letter-spacing:-0.277px;">$345,540.00</span>
<span class="t" style="left:975.33px;top:615.06px;font-size:13.4px;line-height:13.4px;font-weight:400;color:#808080;letter-spacing:-0.130px;">43 %</span>
<span class="t" style="left:1293.30px;top:598.15px;font-size:14.0px;line-height:14.0px;font-weight:400;color:#797979;letter-spacing:-0.277px;">$696,540.00</span>
<span class="t" style="left:1380.93px;top:615.06px;font-size:13.4px;line-height:13.4px;font-weight:400;color:#808080;letter-spacing:-0.130px;">87 %</span>
<span class="t" style="left:380.23px;top:652.98px;font-size:15.5px;line-height:15.5px;font-weight:400;color:#555;letter-spacing:0.489px;">Molly Clark</span>
<span class="t" style="left:617.50px;top:653.65px;font-size:14.0px;line-height:14.0px;font-weight:400;color:#797979;letter-spacing:-0.321px;">$1,000,000.00</span>
<span class="t" style="left:752.70px;top:653.65px;font-size:14.0px;line-height:14.0px;font-weight:400;color:#797979;letter-spacing:-0.277px;">$424,894.59</span>
<span class="t" style="left:1022.70px;top:653.65px;font-size:14.0px;line-height:14.0px;font-weight:400;color:#797979;letter-spacing:-0.277px;">$382,200.00</span>
<span class="t" style="left:1157.70px;top:653.65px;font-size:14.0px;line-height:14.0px;font-weight:400;color:#797979;letter-spacing:-0.277px;">$312,000.00</span>
<span class="t" style="left:1428.20px;top:653.65px;font-size:14.0px;line-height:14.0px;font-weight:400;color:#797979;letter-spacing:-0.181px;">$0.00</span>
<span class="t" style="left:887.70px;top:644.85px;font-size:14.0px;line-height:14.0px;font-weight:400;color:#797979;letter-spacing:-0.277px;">$312,000.00</span>
<span class="t" style="left:975.33px;top:661.76px;font-size:13.4px;line-height:13.4px;font-weight:400;color:#808080;letter-spacing:-0.130px;">31 %</span>
<span class="t" style="left:1293.30px;top:644.85px;font-size:14.0px;line-height:14.0px;font-weight:400;color:#797979;letter-spacing:-0.277px;">$624,000.00</span>
<span class="t" style="left:1380.93px;top:661.76px;font-size:13.4px;line-height:13.4px;font-weight:400;color:#808080;letter-spacing:-0.130px;">62 %</span>
<span class="t" style="left:317.29px;top:362.91px;font-size:9.2px;line-height:9.2px;font-weight:400;color:#fff;letter-spacing:0.107px;-webkit-text-stroke:0.45px #fff;">NW</span>
<span class="t" style="left:339.49px;top:421.41px;font-size:9.2px;line-height:9.2px;font-weight:400;color:#fff;letter-spacing:0.107px;-webkit-text-stroke:0.45px #fff;">NW</span>
<span class="t" style="left:349.79px;top:468.11px;font-size:9.2px;line-height:9.2px;font-weight:400;color:#fff;letter-spacing:0.154px;-webkit-text-stroke:0.45px #fff;">AS</span>
<span class="t" style="left:340.99px;top:514.81px;font-size:9.2px;line-height:9.2px;font-weight:400;color:#fff;letter-spacing:1.123px;-webkit-text-stroke:0.45px #fff;">DM</span>
<span class="t" style="left:345.29px;top:561.51px;font-size:9.2px;line-height:9.2px;font-weight:400;color:#fff;letter-spacing:0.139px;-webkit-text-stroke:0.45px #fff;">RR</span>
<span class="t" style="left:350.04px;top:608.21px;font-size:9.2px;line-height:9.2px;font-weight:400;color:#fff;letter-spacing:0.170px;-webkit-text-stroke:0.45px #fff;">TS</span>
<span class="t" style="left:348.29px;top:654.91px;font-size:9.2px;line-height:9.2px;font-weight:400;color:#fff;letter-spacing:1.123px;-webkit-text-stroke:0.45px #fff;">MC</span>
</main>
</body>
</html>
